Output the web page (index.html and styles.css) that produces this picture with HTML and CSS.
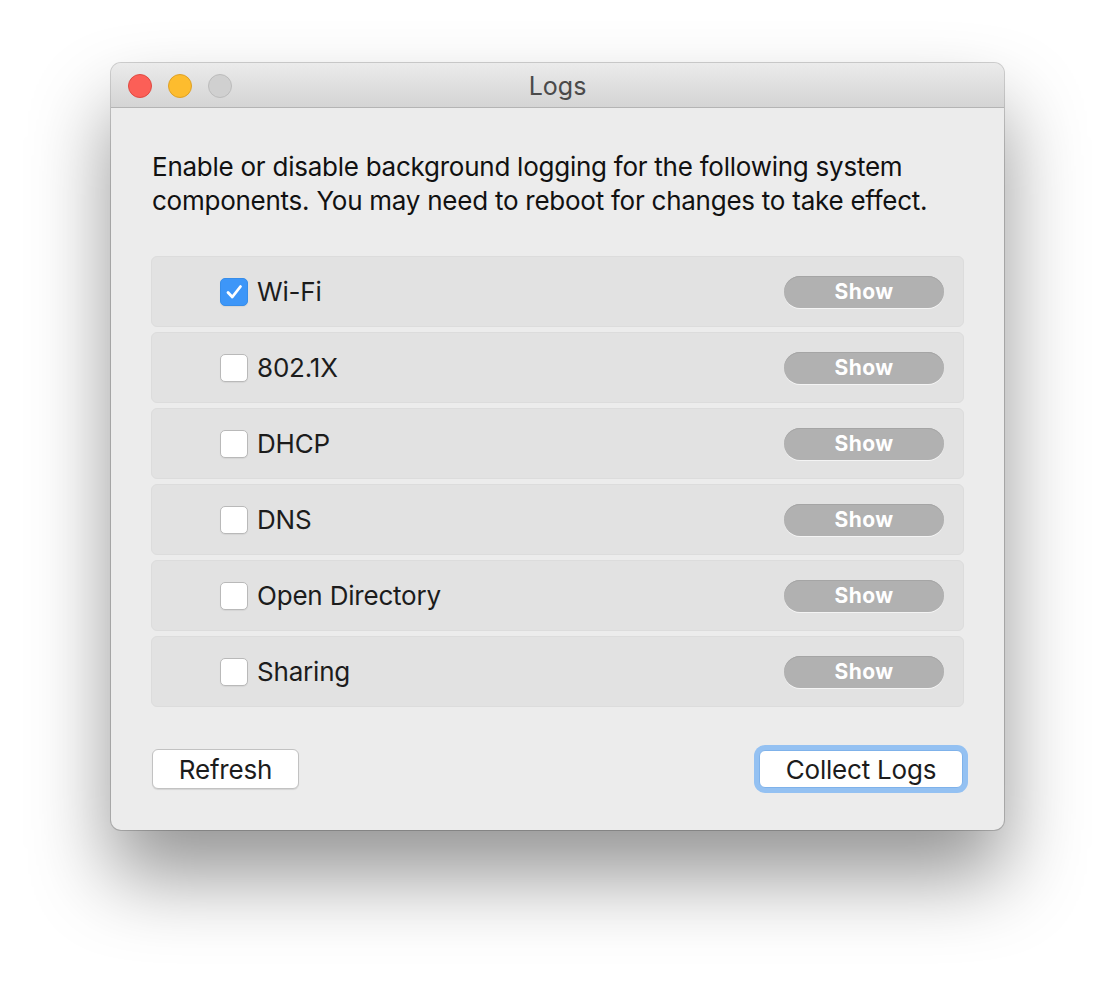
FILE: index.html
```html
<!DOCTYPE html>
<html lang="en">
<head>
  <meta charset="UTF-8" />
  <title>Logs</title>
  <link rel="stylesheet" href="styles.css">
</head>
<body>

<div class="desktop">
<div class="window">
  <div class="titlebar">
    <div class="lights">
      <span class="light close"></span>
      <span class="light min"></span>
      <span class="light zoom"></span>
    </div>
    <div class="title">Logs</div>
  </div>

  <div class="content">
    <p class="intro">Enable or disable background logging for the following system components. You may need to reboot for changes to take effect.</p>

    <div class="log-list">
      <div class="log-row">
        <label class="item"><span class="check on"><svg viewBox="0 0 28 28" width="28" height="28"><path d="M8 14.5 L12.3 19 L20.5 8.5" fill="none" stroke="#fff" stroke-width="2.8" stroke-linecap="round" stroke-linejoin="round"/></svg></span>Wi-Fi</label>
        <button class="show-btn">Show</button>
      </div>
      <div class="log-row">
        <label class="item"><span class="check"></span>802.1X</label>
        <button class="show-btn">Show</button>
      </div>
      <div class="log-row">
        <label class="item"><span class="check"></span>DHCP</label>
        <button class="show-btn">Show</button>
      </div>
      <div class="log-row">
        <label class="item"><span class="check"></span>DNS</label>
        <button class="show-btn">Show</button>
      </div>
      <div class="log-row">
        <label class="item"><span class="check"></span>Open Directory</label>
        <button class="show-btn">Show</button>
      </div>
      <div class="log-row">
        <label class="item"><span class="check"></span>Sharing</label>
        <button class="show-btn">Show</button>
      </div>
    </div>

    <div class="actions">
      <button class="btn">Refresh</button>
      <button class="btn default">Collect Logs</button>
    </div>
  </div>
</div>
</div>

</body>
</html>
```

FILE: styles.css
```css
body { margin: 0; background: #fff; font-family: Inter, "Liberation Sans", sans-serif; color: #1c1c1c; }
.desktop { height: 990px; padding: 63px 0 0 111px; box-sizing: border-box; overflow: hidden; }

.window { width: 893px; border-radius: 10px; background: #ececec; overflow: hidden;
  box-shadow: 0 0 0 1px rgba(0,0,0,0.18), 0 46px 80px rgba(0,0,0,0.42); }

.titlebar { height: 45px; padding-top: 2px; display: flex; align-items: center; justify-content: center; position: relative;
  background: linear-gradient(#ebebeb, #d4d4d4); border-bottom: 1px solid #b4b4b4; box-sizing: border-box; }
.title { font-size: 25px; color: #4a4a4a; }
.lights { position: absolute; left: 17px; top: 11px; display: flex; gap: 16px; }
.light { width: 24px; height: 24px; border-radius: 50%; box-sizing: border-box; }
.light.close { background: #fc5f57; border: 1px solid #df4a42; }
.light.min { background: #fdbc2e; border: 1px solid #dea126; }
.light.zoom { background: #d0d0d0; border: 1px solid #bcbcbc; }

.content { padding: 42px 40px 41px 41px; }
.intro { margin: 0 0 38px; font-size: 26px; line-height: 34px; letter-spacing: -0.25px; color: #111; }

.log-list { display: flex; flex-direction: column; gap: 5px; margin-left: -1px; }
.log-row { height: 71px; box-sizing: border-box; display: flex; align-items: center; justify-content: space-between;
  padding: 0 19px 0 68px; background: #e2e2e2; border: 1px solid #dcdcdc; border-radius: 6px; }
.item { display: flex; align-items: center; gap: 9px; font-size: 26px; letter-spacing: -0.2px; color: #1c1c1c; }
.check { width: 28px; height: 28px; box-sizing: border-box; border-radius: 5px; background: #fff;
  border: 1px solid #b9b9b9; box-shadow: 0 1px 1px rgba(0,0,0,0.06); }
.check.on { background: #3d96f8; border-color: #378de9; }
.check svg { display: block; margin: -1px; }

.show-btn { width: 160px; height: 32px; border: none; border-radius: 16px; background: #b1b1b1; color: #fff;
  font-family: inherit; font-weight: 700; font-size: 21px; letter-spacing: 0.4px;
  box-shadow: inset 0 1px 0 #a5a5a5, 0 1px 0 #f4f4f4; }

.actions { display: flex; justify-content: space-between; align-items: center; margin-top: 42px; }
.btn { height: 40px; width: 147px; border-radius: 6px; background: #fff; border: 1px solid #c2c2c2;
  font-family: inherit; font-size: 26px; letter-spacing: -0.2px; color: #1c1c1c; box-shadow: 0 1px 1px rgba(0,0,0,0.1); }
.btn.default { height: 38px; width: 204px; margin-right: 1px; border-color: #7fb2ea;
  box-shadow: 0 0 0 5px #94c1f2; }
```
